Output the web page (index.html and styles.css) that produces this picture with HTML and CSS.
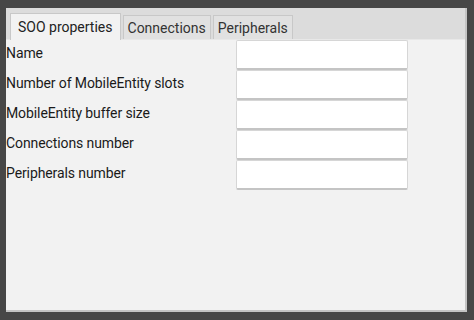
FILE: index.html
```html
<!DOCTYPE html>
<html>
<head>
<meta charset="utf-8">
<link rel="stylesheet" href="styles.css">
</head>
<body>
<div class="window">
  <div class="tabbar">
    <div class="tab active">SOO properties</div>
    <div class="tab">Connections</div>
    <div class="tab">Peripherals</div>
  </div>
  <div class="content">
    <div class="row"><span class="label">Name</span><input class="field" type="text"></div>
    <div class="row"><span class="label">Number of MobileEntity slots</span><input class="field" type="text"></div>
    <div class="row"><span class="label">MobileEntity buffer size</span><input class="field" type="text"></div>
    <div class="row"><span class="label">Connections number</span><input class="field" type="text"></div>
    <div class="row"><span class="label">Peripherals number</span><input class="field" type="text"></div>
  </div>
</div>
</body>
</html>
```

FILE: styles.css
```css
html, body {
  margin: 0;
  padding: 0;
  background: #474747;
  width: 474px;
  height: 320px;
  overflow: hidden;
}
body {
  padding: 8px 6px 0 6px;
  box-sizing: border-box;
  font-family: "Roboto", "Open Sans", sans-serif;
  color: #1a1a1a;
}
.window {
  width: 461px;
  height: 304px;
  background: #f2f2f2;
  border-right: 2px solid #c4c4c4;
  border-bottom: 2px solid #c4c4c4;
  box-sizing: border-box;
  display: flex;
  flex-direction: column;
}
.tabbar {
  height: 32px;
  flex: none;
  background: #dcdcdc;
  border-bottom: 1px solid #e8e8e8;
  box-sizing: border-box;
  display: flex;
  align-items: flex-end;
  padding-left: 4px;
  gap: 2px;
}
.tab {
  height: 24px;
  padding: 0 4px;
  background: #e1e1e1;
  border: 1px solid #c8c8c8;
  border-bottom: none;
  font-size: 14px;
  line-height: 24px;
  color: #333;
  box-sizing: border-box;
}
.tab.active {
  height: 27px;
  background: #f2f2f2;
  margin-bottom: -1px;
  line-height: 27px;
  padding: 0 7px;
  color: #222;
}
.content {
  display: flex;
  flex-direction: column;
}
.row {
  height: 30px;
  display: flex;
  align-items: flex-start;
}
.label {
  width: 230px;
  font-size: 14px;
  letter-spacing: -0.1px;
  line-height: 20px;
  padding-top: 3px;
}
.field {
  width: 172px;
  height: 30px;
  margin: 0;
  box-sizing: border-box;
  border: 1px solid #d6d6d6;
  border-bottom: 2px solid #c4c4c4;
  border-radius: 2px;
  background: #fff;
  outline: none;
}
```
